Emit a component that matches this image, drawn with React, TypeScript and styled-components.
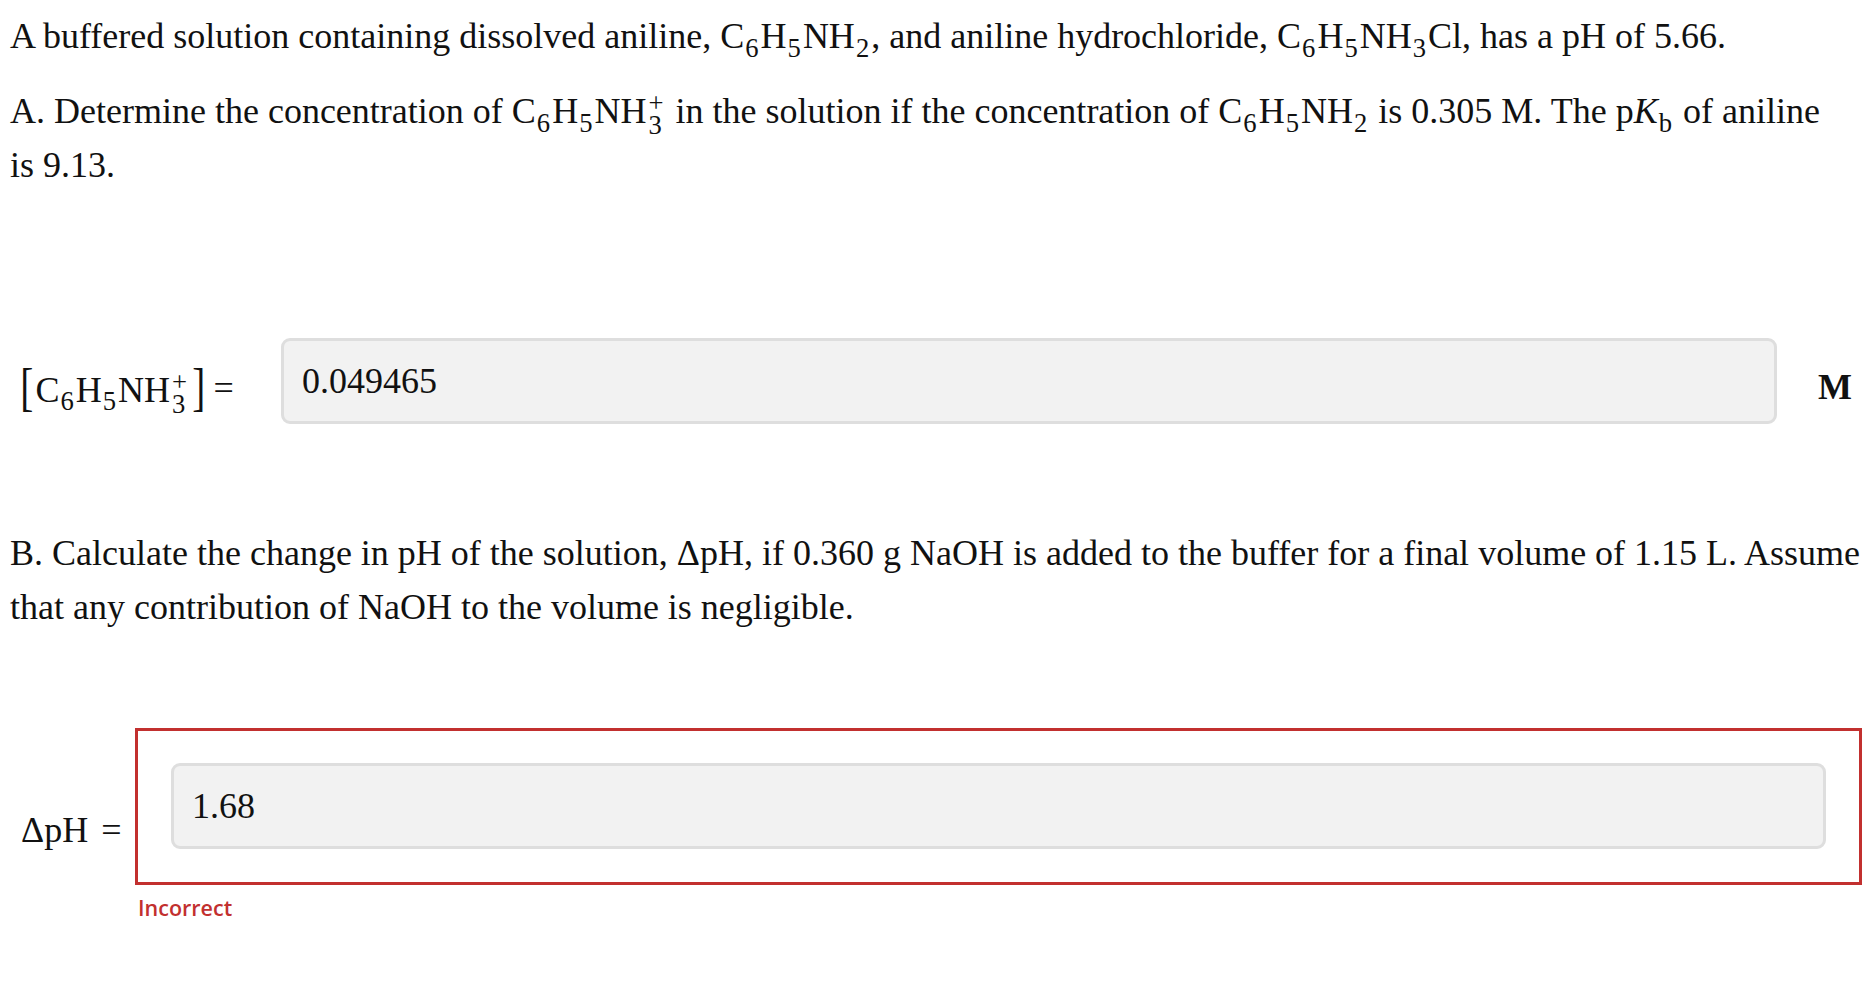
import styled, { createGlobalStyle } from "styled-components";

const GlobalStyle = createGlobalStyle`
  html, body {
    margin: 0;
    padding: 0;
    background: #fff;
  }
  body {
    font-family: "Liberation Serif", "Times New Roman", serif;
    color: #111;
  }
`;

const Page = styled.div`
  padding: 9px 12px 40px 10px;
  font-size: 36px;
`;

const Para = styled.p<{ $top?: number }>`
  margin: ${(p) => p.$top ?? 0}px -12px 0 0;
  line-height: 54px;
`;

const Sub = styled.sub`
  font-size: 0.74em;
  vertical-align: -0.32em;
  line-height: 0;
  margin: 0 2px 0 1px;
`;

const StackWrap = styled.span`
  display: inline-flex;
  flex-direction: column;
  vertical-align: 0.4em;
  font-size: 0.74em;
  line-height: 0.8em;
  margin: 0 3px 0 2px;
`;

const Italic = styled.i`
  font-style: italic;
`;

const AnswerRow = styled.div<{ $top: number }>`
  display: grid;
  grid-template-columns: 271px 1fr 85px;
  align-items: center;
  margin-top: ${(p) => p.$top}px;
`;

const Label = styled.div`
  padding: 14px 0 0 8px;
  display: flex;
  align-items: center;
  gap: 6px;
  white-space: nowrap;
`;

const Bracket = styled.span`
  display: inline-block;
  font-size: 1.45em;
  transform: scaleX(0.75);
  line-height: 1;
  vertical-align: -0.06em;
`;

const Unit = styled.div`
  font-weight: bold;
  text-align: right;
  padding: 12px 10px 0 0;
`;

const Field = styled.div`
  height: 86px;
  box-sizing: border-box;
  border: 3px solid #dedede;
  border-radius: 9px;
  background: #f2f2f2;
  padding-left: 18px;
  display: flex;
  align-items: center;
  font-family: "Liberation Serif", "Times New Roman", serif;
  font-size: 36px;
`;

const WrongRow = styled.div`
  display: grid;
  grid-template-columns: 125px 1fr;
  margin-top: 94px;
`;

const DeltaLabel = styled.div`
  padding: 75px 0 0 11px;
  line-height: 54px;
  display: flex;
  gap: 13px;
  white-space: nowrap;
`;

const WrongBox = styled.div`
  border: 3px solid #c2302f;
  padding: 32px 33px 33px 33px;
`;

const Feedback = styled.div`
  margin-left: 128px;
  padding-top: 9px;
  line-height: 28px;
  font-family: "Open Sans", "Noto Sans", sans-serif;
  font-weight: 600;
  font-size: 21.5px;
  color: #c2302f;
`;

function Stack({ up, down }: { up: string; down: string }) {
  return (
    <StackWrap>
      <span>{up}</span>
      <span>{down}</span>
    </StackWrap>
  );
}

function Anilinium() {
  return (
    <>
      C<Sub>6</Sub>H<Sub>5</Sub>NH
      <Stack up="+" down="3" />
    </>
  );
}

function Aniline() {
  return (
    <>
      C<Sub>6</Sub>H<Sub>5</Sub>NH<Sub>2</Sub>
    </>
  );
}

export default function App() {
  return (
    <>
      <GlobalStyle />
      <Page>
        <Para>
          A buffered solution containing dissolved aniline, <Aniline />, and
          aniline hydrochloride, C<Sub>6</Sub>H<Sub>5</Sub>NH<Sub>3</Sub>Cl, has
          a pH of 5.66.
        </Para>
        <Para $top={21}>
          A. Determine the concentration of <Anilinium /> in the solution if the
          concentration of <Aniline /> is 0.305 M. The p<Italic>K</Italic>
          <Sub>b</Sub> of aniline is{"\u00a0"}9.13.
        </Para>

        <AnswerRow $top={146}>
          <Label>
            <span>
              <Bracket>[</Bracket>
              <Anilinium />
              <Bracket>]</Bracket>
            </span>
            <span>=</span>
          </Label>
          <Field>0.049465</Field>
          <Unit>M</Unit>
        </AnswerRow>

        <Para $top={102}>
          B. Calculate the change in pH of the solution, ΔpH, if 0.360 g NaOH is
          added to the buffer for a final volume of 1.15 L. Assume that any
          contribution of NaOH to the volume is negligible.
        </Para>

        <WrongRow>
          <DeltaLabel>
            <span>ΔpH</span>
            <span>=</span>
          </DeltaLabel>
          <WrongBox>
            <Field>1.68</Field>
          </WrongBox>
        </WrongRow>
        <Feedback>Incorrect</Feedback>
      </Page>
    </>
  );
}
